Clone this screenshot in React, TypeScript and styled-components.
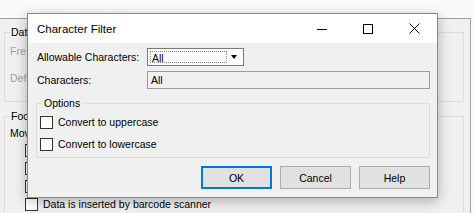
import styled, { createGlobalStyle } from "styled-components";

const GlobalStyle = createGlobalStyle`
	html, body {
		margin: 0;
		padding: 0;
		background: #fafafa;
	}
	* {
		box-sizing: border-box;
	}
`;

const uiFont = `"Liberation Sans", Arial, sans-serif`;

export default function App() {
	return (
		<Desktop>
			<GlobalStyle />

			<ParentWindow>
				<GroupBox>
					<Legend>Dat</Legend>
					<FieldRow muted>Fre</FieldRow>
					<FieldRow muted gapTop={7}>Def</FieldRow>
				</GroupBox>

				<GroupBox gapTop={6}>
					<Legend>Foc</Legend>
					<TextRow>Mov</TextRow>
					<ParentCheckRow><CheckBox /></ParentCheckRow>
					<ParentCheckRow><CheckBox /></ParentCheckRow>
					<ParentCheckRow><CheckBox /></ParentCheckRow>
					<ParentCheckRow>
						<CheckBox />
						<span>Data is inserted by barcode scanner</span>
					</ParentCheckRow>
				</GroupBox>
			</ParentWindow>

			<Dialog>
				<TitleBar>
					<Title>Character Filter</Title>
					<CaptionButtons>
						<CaptionButton>
							<svg width="10" height="10" viewBox="0 0 10 10">
								<line x1="0" y1="5.5" x2="10" y2="5.5" stroke="#000" strokeWidth="1" />
							</svg>
						</CaptionButton>
						<CaptionButton>
							<svg width="10" height="10" viewBox="0 0 10 10">
								<rect x="0.5" y="0.5" width="9" height="9" fill="none" stroke="#000" strokeWidth="1" />
							</svg>
						</CaptionButton>
						<CaptionButton>
							<svg width="11" height="11" viewBox="0 0 11 11">
								<path d="M0.5 0.5 L10.5 10.5 M10.5 0.5 L0.5 10.5" stroke="#000" strokeWidth="1" />
							</svg>
						</CaptionButton>
					</CaptionButtons>
				</TitleBar>

				<Body>
					<FormGrid>
						<Label>Allowable Characters:</Label>
						<Combo>
							<FocusText>All</FocusText>
							<ComboArrow />
						</Combo>

						<Label>Characters:</Label>
						<TextBox>All</TextBox>
					</FormGrid>

					<OptionsGroup>
						<Legend>Options</Legend>
						<CheckRow>
							<CheckBox />
							<span>Convert to uppercase</span>
						</CheckRow>
						<CheckRow>
							<CheckBox />
							<span>Convert to lowercase</span>
						</CheckRow>
					</OptionsGroup>

					<ButtonRow>
						<PushButton isDefault>OK</PushButton>
						<PushButton>Cancel</PushButton>
						<PushButton>Help</PushButton>
					</ButtonRow>
				</Body>
			</Dialog>
		</Desktop>
	);
}

const Desktop = styled.div`
	position: relative;
	width: 474px;
	height: 213px;
	overflow: hidden;
	background: #fafafa;
	font-family: ${uiFont};
	font-size: 10.5px;
	color: #000;
`;

const ParentWindow = styled.div`
	margin-top: 18px;
	width: 471px;
	height: 200px;
	padding: 5px 6px 0 4px;
	background: #f0f0f0;
	border-top: 1px solid #a0a0a0;
	border-right: 1px solid #a0a0a0;
`;

const GroupBox = styled.fieldset<{ gapTop?: number }>`
	margin: ${(p) => p.gapTop ?? 0}px 0 0 0;
	padding: 1px 0 13px 5px;
	min-width: 0;
	border: 1px solid #dcdcdc;
`;

const Legend = styled.legend`
	padding: 0 1px;
	margin-left: 0;
	line-height: 16px;
	font-size: 10.5px;
`;

const FieldRow = styled.div<{ muted?: boolean; gapTop?: number }>`
	height: 20px;
	line-height: 20px;
	margin-top: ${(p) => p.gapTop ?? 0}px;
	color: ${(p) => (p.muted ? "#a0a0a0" : "#000")};
`;

const TextRow = styled.div`
	height: 16px;
	line-height: 16px;
`;

const ParentCheckRow = styled.div`
	display: flex;
	align-items: center;
	gap: 5px;
	height: 18px;
	padding-left: 15px;
`;

const CheckBox = styled.span`
	display: inline-block;
	flex: none;
	width: 13px;
	height: 13px;
	background: #fff;
	border: 1px solid #333;
`;

const Dialog = styled.div`
	position: absolute;
	left: 27px;
	top: 13px;
	width: 411px;
	background: #f0f0f0;
	border: 1px solid #888;
	box-shadow: 0 3px 12px rgba(0, 0, 0, 0.28);
`;

const TitleBar = styled.div`
	display: flex;
	align-items: center;
	justify-content: space-between;
	height: 29px;
	background: #fff;
`;

const Title = styled.div`
	padding-left: 9px;
	font-size: 11.5px;
`;

const CaptionButtons = styled.div`
	display: flex;
	height: 100%;
`;

const CaptionButton = styled.div`
	display: flex;
	align-items: center;
	justify-content: center;
	width: 46px;
	height: 100%;
`;

const Body = styled.div`
	padding: 5px 7px 8px 8px;
`;

const FormGrid = styled.div`
	display: grid;
	grid-template-columns: 111px 1fr;
	row-gap: 5px;
	align-items: center;
`;

const Label = styled.div`
	padding-left: 1px;
`;

const Combo = styled.div`
	display: flex;
	align-items: center;
	width: 97px;
	height: 18px;
	padding: 2px;
	background: #fff;
	border: 1px solid #7a7a7a;
`;

const FocusText = styled.div`
	flex: 1;
	height: 100%;
	line-height: 12px;
	padding-left: 1px;
	border: 1px dotted #888;
`;

const ComboArrow = styled.div`
	width: 14px;
	display: flex;
	justify-content: center;
	&::after {
		content: "";
		border-left: 3.5px solid transparent;
		border-right: 3.5px solid transparent;
		border-top: 4px solid #000;
	}
`;

const TextBox = styled.div`
	height: 18px;
	line-height: 16px;
	padding-left: 3px;
	background: #f0f0f0;
	border: 1px solid #9a9a9a;
`;

const OptionsGroup = styled.fieldset`
	margin: 6px 0 0 0;
	padding: 0 0 2px 3px;
	min-width: 0;
	border: 1px solid #dcdcdc;

	legend {
		margin-left: 2px;
		padding: 0 2px;
	}
`;

const CheckRow = styled.div`
	display: flex;
	align-items: center;
	gap: 5px;
	height: 22px;
`;

const ButtonRow = styled.div`
	display: flex;
	justify-content: flex-end;
	gap: 8px;
	margin-top: 8px;
`;

const PushButton = styled.div<{ isDefault?: boolean }>`
	display: flex;
	align-items: center;
	justify-content: center;
	width: 71px;
	height: 23px;
	background: #e1e1e1;
	border: ${(p) => (p.isDefault ? "2px solid #0078d7" : "1px solid #adadad")};
`;
